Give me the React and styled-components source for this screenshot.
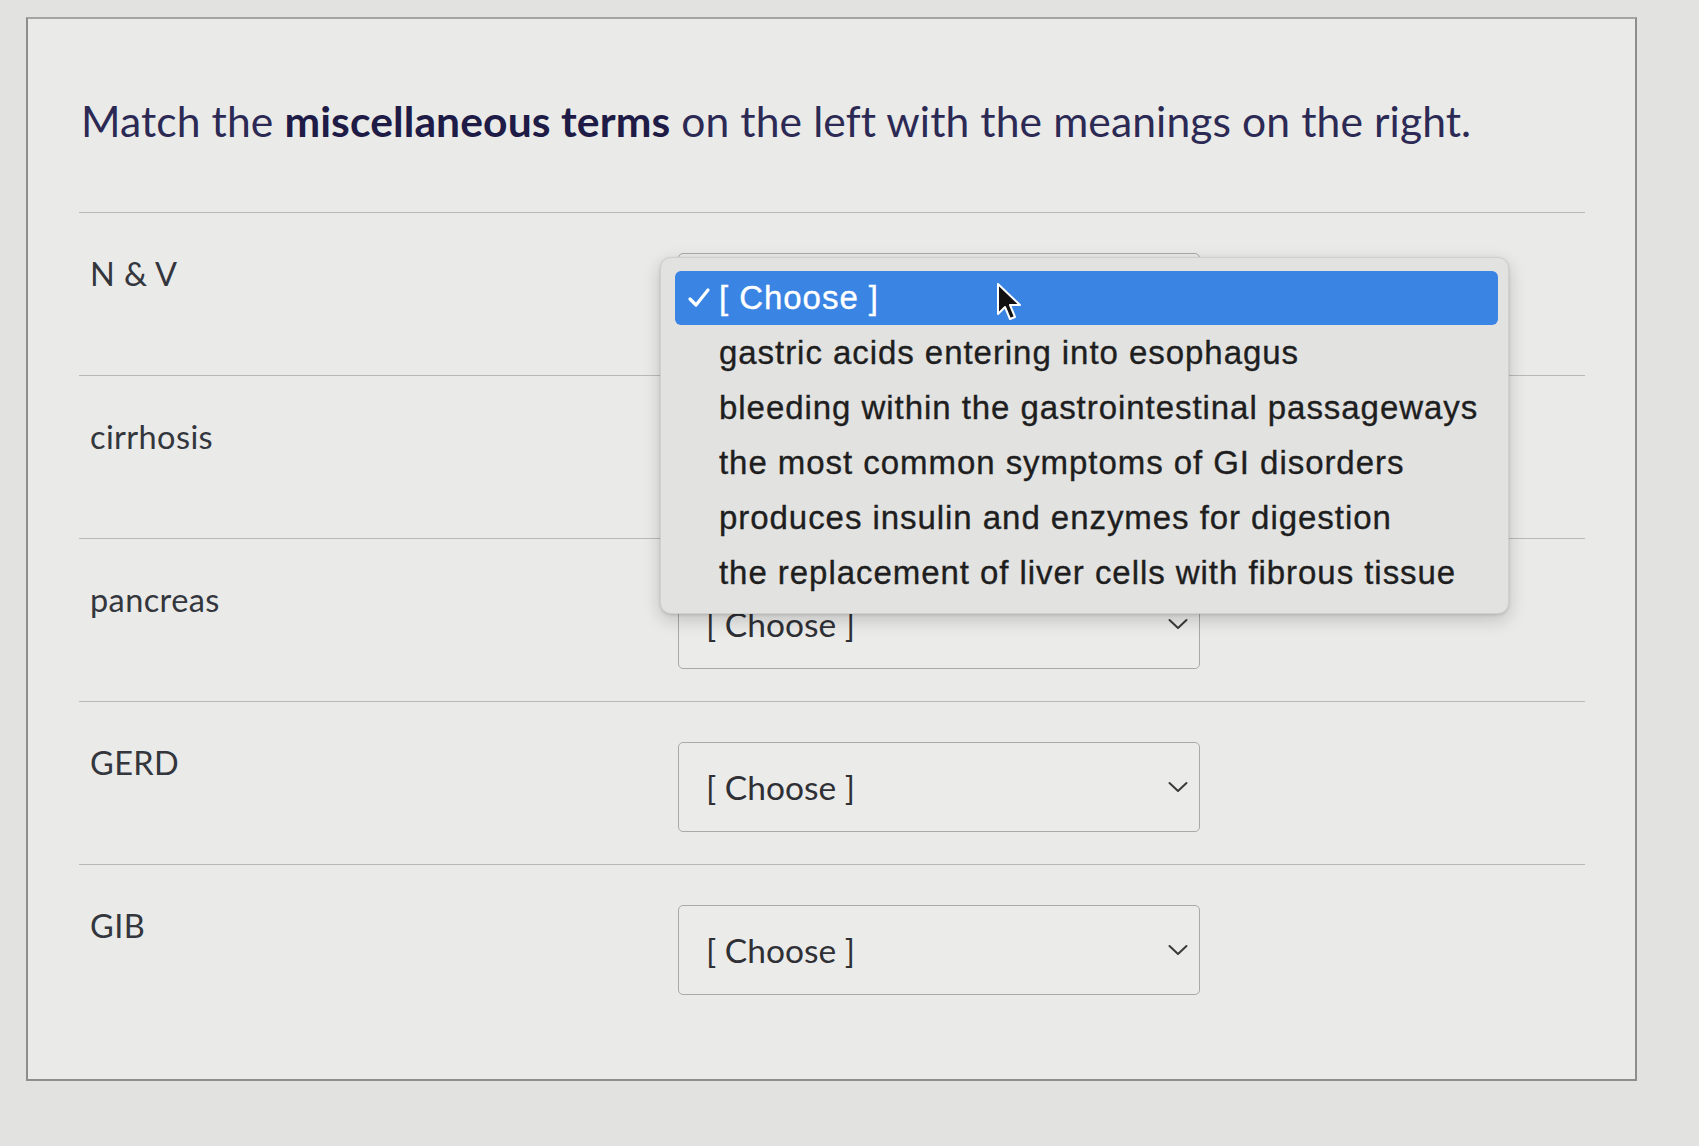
import React from "react";
import styled, { createGlobalStyle } from "styled-components";

const Global = createGlobalStyle`
  html, body { margin: 0; padding: 0; }
  body {
    background: #e2e2e0;
    width: 1699px;
    height: 1146px;
    overflow: hidden;
    font-family: Lato, "Noto Sans", sans-serif;
  }
`;

const Card = styled.div`
  box-sizing: border-box;
  margin: 17px 0 0 26px;
  width: 1611px;
  height: 1064px;
  background: #eaeae8;
  border: 2px solid #8e8e8e;
  border-top-color: #a4a4a4;
  padding: 77px 0 0 53px;
`;

const Heading = styled.h1`
  margin: 0;
  font-family: Lato, sans-serif;
  font-weight: 400;
  font-size: 42.6px;
  line-height: 50px;
  color: #2c2a55;
  letter-spacing: 0.1px;
  b { font-weight: 700; color: #1e1b46; }
`;

const List = styled.div`
  margin: 66px 0 0 -2px;
  width: 1506px;
`;

const Row = styled.div`
  display: grid;
  grid-template-columns: 599px 522px;
  align-items: start;
  height: 163px;
  border-top: 1.5px solid #b9b9b8;
  box-sizing: border-box;
`;

const Label = styled.div`
  padding: 42px 0 0 11px;
  font-family: Lato, sans-serif;
  font-size: 32.5px;
  letter-spacing: 0.4px;
  line-height: 38px;
  color: #33363c;
`;

const SelectWrap = styled.div`
  position: relative;
  margin-top: 40px;
`;

const SelectBox = styled.div`
  box-sizing: border-box;
  height: 90px;
  display: flex;
  align-items: center;
  justify-content: space-between;
  padding: 0 10px 0 27px;
  border: 1.5px solid #a9a9a9;
  border-radius: 5px;
  background: #ebebea;
  font-family: Lato, sans-serif;
  font-size: 33.5px;
  color: #2f3035;
`;

const Popup = styled.div`
  position: absolute;
  left: -18px;
  top: 4px;
  width: 849px;
  box-sizing: border-box;
  padding: 13px 10px 13px 14px;
  background: #e2e2e1;
  border: 1px solid #cfcfce;
  border-radius: 11px;
  box-shadow: 0 6px 18px rgba(0, 0, 0, 0.18), 0 1px 3px rgba(0, 0, 0, 0.12);
  z-index: 5;
`;

const Option = styled.div`
  position: relative;
  height: ${(p) => (p.$active ? 54 : 55)}px;
  display: flex;
  align-items: center;
  padding-left: 44px;
  border-radius: 6px;
  background: ${(p) => (p.$active ? "#3a84e4" : "transparent")};
  color: ${(p) => (p.$active ? "#ffffff" : "#1e1e1e")};
  font-family: "Liberation Sans", Arial, sans-serif;
  font-size: 33px;
  letter-spacing: 0.95px;
  -webkit-text-stroke: 0.35px ${(p) => (p.$active ? "#ffffff" : "#1e1e1e")};
  white-space: nowrap;
`;

const Check = styled.span`
  position: absolute;
  left: 12px;
  top: 50%;
  transform: translateY(-50%);
  display: flex;
`;

const Cursor = styled.svg`
  position: absolute;
  left: 335px;
  top: 24px;
  z-index: 6;
`;

const Chevron = () => (
  <svg width="22" height="12" viewBox="0 0 22 12">
    <path d="M2.5 2 L11 10 L19.5 2" fill="none" stroke="#3a3a3a" strokeWidth="2" strokeLinecap="round" strokeLinejoin="round" />
  </svg>
);

const options = [
  "gastric acids entering into esophagus",
  "bleeding within the gastrointestinal passageways",
  "the most common symptoms of GI disorders",
  "produces insulin and enzymes for digestion",
  "the replacement of liver cells with fibrous tissue",
];

const terms = ["N & V", "cirrhosis", "pancreas", "GERD", "GIB"];

export default function App() {
  return (
    <>
      <Global />
      <Card>
        <Heading>
          Match the <b>miscellaneous terms</b> on the left with the meanings on the right.
        </Heading>
        <List>
          {terms.map((t, i) => (
            <Row key={t}>
              <Label>{t}</Label>
              <SelectWrap>
                <SelectBox>
                  <span>[ Choose ]</span>
                  <Chevron />
                </SelectBox>
                {i === 0 && (
                  <Popup>
                    <Option $active>
                      <Check>
                        <svg width="24" height="22" viewBox="0 0 24 22">
                          <path d="M3 12 L9 18 L21 3" fill="none" stroke="#fff" strokeWidth="3.2" strokeLinecap="round" strokeLinejoin="round" />
                        </svg>
                      </Check>
                      [ Choose ]
                    </Option>
                    {options.map((o) => (
                      <Option key={o}>{o}</Option>
                    ))}
                    <Cursor width="28" height="42" viewBox="0 0 28 42">
                      <path d="M2 2 L2 32 L9 25 L14 37 L19 35 L14 23 L24 23 Z" fill="#111" stroke="#fff" strokeWidth="2" strokeLinejoin="round" />
                    </Cursor>
                  </Popup>
                )}
              </SelectWrap>
            </Row>
          ))}
        </List>
      </Card>
    </>
  );
}
